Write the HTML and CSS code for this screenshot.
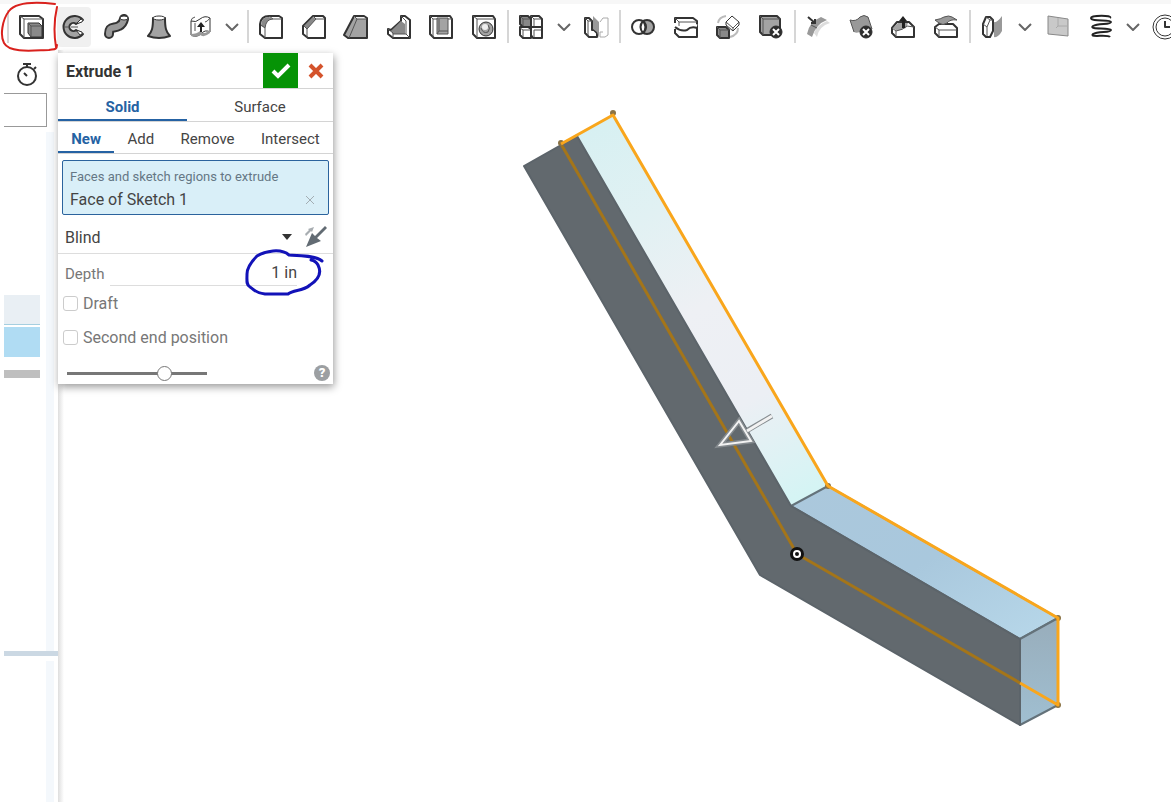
FILE: index.html
```html
<!DOCTYPE html>
<html lang="en">

<head>
	<meta charset="UTF-8">
	<title>Extrude 1</title>
	<link rel="stylesheet" href="styles.css">
</head>

<body>
	<header class="toolbar">
		<div class="group">
			<button class="tool" aria-label="Extrude"><svg viewBox="0 0 26 26"><path class="ln" d="M2 2H21L25 5V24H6L2 20Z"/><path class="lt" d="M2 2L6 5M6 24V5H25"/><path class="ln thin dark" d="M10 9H21L24 12V23H13L10 19Z"/><path class="lt" d="M10 9L13 12V23M13 12H24"/></svg></button>
			<button class="tool on" aria-label="Revolve"><svg viewBox="0 0 26 26"><path class="ln gray" d="M22 6A11 11 0 1 0 22 20L15 16A4 4 0 1 1 15 10Z"/><path class="ln thin" d="M15 10L20 5Q23 6 21 8Z"/><path class="ln thin" d="M15 16L21 18Q22 21 19 21Z"/><path class="lt" d="M3 13H8M10 13H17"/></svg></button>
			<button class="tool" aria-label="Sweep"><svg viewBox="0 0 26 26"><path class="pipe" d="M6 20C6 11 11 15 16 12Q20 10 21 5"/><path class="pipe-in" d="M6 20C6 11 11 15 16 12Q20 10 21 5"/><ellipse class="ln thin" cx="21" cy="4" rx="4" ry="2"/></svg></button>
			<button class="tool" aria-label="Loft"><svg viewBox="0 0 26 26"><path class="ln gray" d="M7 4C7 14 6 18 2 22Q13 26 24 22C20 18 19 14 19 4Z"/><ellipse class="ln thin" cx="13" cy="4" rx="6" ry="2"/></svg></button>
			<button class="tool" aria-label="Thicken"><svg viewBox="0 0 26 26"><path class="ln thin" d="M3 7Q8 9 12 5Q17 1 22 4V18Q17 15 13 20Q8 24 3 21Z"/><path class="soft" d="M3 20Q9 20 12 17Q17 22 22 15V19Q16 24 12 21Q8 24 3 22Z"/><path class="lt" d="M3 7Q3 4 7 3M7 9V17M22 4Q19 8 17 8"/><path class="solid" d="M13 8L17 13H14V18H12V13H9Z"/></svg></button>
			<button class="more" aria-label="More"><svg viewBox="0 0 14 8"><path d="M1 1L7 7L13 1"/></svg></button>
		</div>
		<div class="group">
			<button class="tool" aria-label="Fillet"><svg viewBox="0 0 26 26"><path class="ln" d="M2 10Q3 2 11 2H21L24 4V24H7L2 20Z"/><path class="dark" d="M3 12Q3 3 11 3L15 5Q8 5 7 14Z"/><path class="lt" d="M3 11L7 14V24M7 14Q8 5 15 5H24M11 2L15 5"/></svg></button>
			<button class="tool" aria-label="Chamfer"><svg viewBox="0 0 26 26"><path class="ln" d="M2 12L12 2H22L24 4V24H7L2 20Z"/><path class="dark" d="M3 12L12 3L15 5L6 15Z"/><path class="lt" d="M3 12L6 15V24M6 15L15 5H24M12 2L15 5"/></svg></button>
			<button class="tool" aria-label="Draft"><svg viewBox="0 0 26 26"><path class="ln gray" d="M11 2H21L24 4V24H5L1 21Z"/><path class="light" d="M11 3H21L23 5H14Z"/><path class="lt" d="M11 2L14 5L6 24M14 5H24"/></svg></button>
			<button class="tool" aria-label="Rib"><svg viewBox="0 0 26 26"><path class="ln" d="M2 15L5 16L15 7V2H19L24 6V24H7L2 20Z"/><path class="dark" d="M5 17L15 7L19 10V20H7Z"/><path class="lt" d="M2 15L7 19V24M15 2L20 7V20L24 24M7 20H20"/></svg></button>
			<button class="tool" aria-label="Shell"><svg viewBox="0 0 26 26"><path class="ln" d="M2 2H22L24 5V24H6L2 20Z"/><path class="lt" d="M2 2L5 5V23M5 5H24"/><path class="lt gray" d="M9 4H20V20H9Z"/><path class="lt" d="M11 5V17L9 20M11 17H20"/></svg></button>
			<button class="tool" aria-label="Hole"><svg viewBox="0 0 26 26"><path class="ln" d="M2 2H22L24 5V24H6L2 20Z"/><path class="lt" d="M2 2L6 5V24M6 5H24"/><circle class="ln thin gray" cx="15" cy="15" r="7"/><path class="lt" d="M10 14Q12 20 17 18Q20 14 17 11"/><circle class="light" cx="14" cy="13" r="3"/></svg></button>
		</div>
		<div class="group">
			<button class="tool" aria-label="Linear pattern"><svg viewBox="0 0 26 26"><path class="ln dark" d="M2 2H10L13 5V13H5L2 10Z"/><path class="ln" d="M13 2H21L24 5V13H13Z"/><path class="ln" d="M2 13H10L13 15V24H5L2 21Z"/><path class="ln" d="M13 13H24V24H15L13 21Z"/><path class="lt" d="M2 2L5 5V12M5 5H12M13 2L16 5V12M16 5H23M2 14L5 16V23M5 16H12M16 16V23M16 16H23"/></svg></button>
			<button class="more" aria-label="More"><svg viewBox="0 0 14 8"><path d="M1 1L7 7L13 1"/></svg></button>
			<button class="tool" aria-label="Mirror"><svg viewBox="0 0 26 26"><path class="pale" d="M17 8L20 4H25V21L22 23H17V18H20"/><path class="ln" d="M2 4H6L9 7V16H11L14 19V23H6L2 19Z"/><path class="soft" d="M10 2L16 8V24L14 18L10 15Z"/><path class="lt" d="M2 4L5 7V22M5 7H9"/></svg></button>
		</div>
		<div class="group">
			<button class="tool" aria-label="Boolean"><svg viewBox="0 0 26 26"><circle class="ln gray" cx="17" cy="13" r="7"/><circle class="ln" cx="9" cy="13" r="7"/><path class="ln" d="M13 7Q8 13 13 19Q18 13 13 7Z"/></svg></button>
			<button class="tool" aria-label="Split"><svg viewBox="0 0 26 26"><path class="ln" d="M2 9V4H20L24 7V22"/><path class="ln" d="M2 15V19L6 23H24V14"/><path class="lt" d="M2 4L6 8H24M6 8V12"/><path class="wave" d="M2 11Q8 17 14 14Q18 10 24 12"/><path class="lt heavy" d="M2 13Q8 18 14 16Q18 12 24 14"/></svg></button>
			<button class="tool" aria-label="Transform"><svg viewBox="0 0 26 26"><path class="arc" d="M3 9Q4 3 11 2M15 23Q23 21 23 14"/><path class="ln dark" d="M2 13H11L14 16V24H5L2 21Z"/><path class="lt" d="M2 13L5 16V24M5 16H14"/><path class="ln thin" d="M11 8L17 2L24 8V11L18 17L11 11Z"/><path class="lt" d="M11 8L18 14L24 8M18 14V17"/></svg></button>
			<button class="tool" aria-label="Delete part"><svg viewBox="0 0 26 26"><path class="ln gray" d="M2 2H19L22 5V21H5L2 18Z"/><path class="lt" d="M2 2L5 5V21M5 5H22"/><circle class="badge" cx="18" cy="18" r="6"/><path class="cross" d="M15 15L21 21M21 15L15 21"/></svg></button>
		</div>
		<div class="group">
			<button class="tool" aria-label="Modify fillet"><svg viewBox="0 0 26 26"><path class="pale-fill" d="M12 23Q14 12 25 9L22 7Q12 11 9 19Z"/><path class="soft" d="M2 20Q4 8 16 3L22 6Q11 10 7 23Z"/><path class="lt" d="M6 11L12 14"/><path class="lt heavy" d="M3 3L10 9M10 5V9H6"/></svg></button>
			<button class="tool" aria-label="Delete face"><svg viewBox="0 0 26 26"><path class="soft" d="M2 6Q8 8 12 3Q16 0 20 3L24 15Q18 13 14 17Q9 20 6 18Z"/><path class="lt" d="M2 6Q8 8 12 3Q16 0 20 3L24 15M6 18L2 6"/><circle class="badge" cx="18" cy="18" r="6"/><path class="cross" d="M15 15L21 21M21 15L15 21"/></svg></button>
			<button class="tool" aria-label="Move face"><svg viewBox="0 0 26 26"><path class="ln" d="M2 14L7 8H19L24 13V23H6L2 19Z"/><path class="gray" d="M3 14L8 9H18L16 14L7 17Z"/><path class="lt" d="M2 14L6 17Q13 16 17 12L24 13M6 17V23"/><path class="solid" d="M13 2L17 7H15V14H12V7H9Z"/></svg></button>
			<button class="tool" aria-label="Replace face"><svg viewBox="0 0 26 26"><path class="ln" d="M2 13L6 10H20L24 14V23H6L2 19Z"/><path class="lt" d="M2 13L6 16H24M6 16V23"/><path class="soft" d="M2 6Q8 5 11 3Q16 1 19 3L24 6Q17 5 14 9Q10 12 6 9Z"/><path class="lt" d="M2 6Q8 5 11 3Q16 1 19 3L24 6Q17 5 14 9Q10 12 6 9Z"/></svg></button>
		</div>
		<div class="group last">
			<button class="tool" aria-label="Plane"><svg viewBox="0 0 26 26"><path class="ln" d="M3 10L6 3H10L13 6V17L10 23H6L3 20Z"/><path class="lt" d="M3 10L7 13L10 6L13 6M7 13V22M6 3L10 6"/><path class="soft" d="M14 8Q17 9 22 2V17Q18 24 14 23Z"/></svg></button>
			<button class="more" aria-label="More"><svg viewBox="0 0 14 8"><path d="M1 1L7 7L13 1"/></svg></button>
			<button class="tool" aria-label="Frame"><svg viewBox="0 0 26 26"><path class="sheet" d="M4 2L24 5V22L4 20Z"/><path class="seam" d="M14 4V12H23M14 12L12 14"/></svg></button>
			<button class="tool" aria-label="Helix"><svg viewBox="0 0 26 26"><path class="coil" d="M22 4C25 1 3 1 3 4C3 8 23 5 23 8C23 11 10 9 5 12C0 16 22 13 23 16C23 19 10 17 5 20C1 24 20 20 22 23"/></svg></button>
			<button class="more" aria-label="More"><svg viewBox="0 0 14 8"><path d="M1 1L7 7L13 1"/></svg></button>
			<button class="tool" aria-label="History"><svg viewBox="0 0 26 26"><circle class="ln thin" cx="13" cy="13" r="12"/><circle class="ln thin" cx="13" cy="13" r="9"/><path class="ln" d="M13 7V13H18"/></svg></button>
		</div>
	</header>

	<main class="work">
		<aside class="side">
			<button class="watch" aria-label="Rebuild time"><svg viewBox="0 0 22 24"><circle cx="11" cy="14" r="9"/><path d="M11 5V2M7 2H15M18 7L20 5M11 14L8 11"/></svg></button>
			<input class="filter" type="text" aria-label="Filter">
			<div class="features">
				<div class="row"></div>
				<div class="row picked"></div>
				<div class="rollback"></div>
			</div>
			<div class="parts"></div>
		</aside>

		<section class="view">
			<svg class="model" viewBox="58 50 1113 752">
				<defs>
					<linearGradient id="side" gradientUnits="userSpaceOnUse" x1="600" y1="120" x2="800" y2="495">
						<stop offset="0" stop-color="#d7f0f2"/>
						<stop offset=".25" stop-color="#e1f1f3"/>
						<stop offset=".5" stop-color="#eef0f4"/>
						<stop offset=".75" stop-color="#eceff4"/>
						<stop offset="1" stop-color="#d5f4f4"/>
					</linearGradient>
					<linearGradient id="top" x1="0" y1="0" x2="1" y2="1">
						<stop offset="0" stop-color="#abc8dc"/>
						<stop offset=".5" stop-color="#a9c8dd"/>
						<stop offset="1" stop-color="#b8d8ea"/>
					</linearGradient>
					<linearGradient id="end" x1="0" y1="0" x2="0" y2="1">
						<stop offset="0" stop-color="#98adbb"/>
						<stop offset="1" stop-color="#a0bfd1"/>
					</linearGradient>
				</defs>
				<path fill="url(#side)" d="M577 136L613 114L828 486L791 506Z"/>
				<path fill="url(#top)" class="edge" d="M791 506L828 486L1058 618L1020 639Z"/>
				<path fill="url(#end)" class="edge" d="M1020 639L1058 618V705L1020 725Z"/>
				<path class="front" d="M524 166L577 136L791 506L1020 639V725L760 575Z"/>
				<path class="hidden" d="M561 144L797 554L1020 683"/>
				<g class="vertex"><circle cx="613" cy="113" r="3"/><circle cx="561" cy="143" r="3"/><circle cx="1058" cy="618" r="3"/><circle cx="1058" cy="705" r="3"/><circle cx="828" cy="486" r="3"/></g>
				<path class="sketch" d="M561 144L613 115L828 486L1058 618V705L1020 683"/>
				<path class="handle-back" d="M720 445L739 421L751 441ZM748 430L772 416"/>
				<path class="handle-gap" d="M747 431L772 416"/>
				<path class="handle" d="M720 445L739 421L751 441Z"/>
				<circle cx="797" cy="554" r="7" fill="#111"/>
				<circle cx="797" cy="554" r="3" fill="#111" stroke="#fff" stroke-width="2"/>
			</svg>

			<form class="dialog">
				<div class="title">
					<h1>Extrude 1</h1>
					<button class="ok" type="button" aria-label="Accept"><svg viewBox="0 0 20 16"><path d="M2 8L7 13L18 2"/></svg></button>
					<button class="cancel" type="button" aria-label="Cancel"><svg viewBox="0 0 16 16"><path d="M2 2L14 14M14 2L2 14"/></svg></button>
				</div>
				<div class="tabs kind">
					<button type="button" class="active">Solid</button>
					<button type="button">Surface</button>
				</div>
				<div class="tabs mode">
					<button type="button" class="active">New</button>
					<button type="button">Add</button>
					<button type="button">Remove</button>
					<button type="button">Intersect</button>
				</div>
				<div class="picks">
					<span class="hint">Faces and sketch regions to extrude</span>
					<div class="pick">
						<span>Face of Sketch 1</span>
						<button type="button" aria-label="Remove Face of Sketch 1"><svg viewBox="0 0 10 10"><path d="M1 1L9 9M9 1L1 9"/></svg></button>
					</div>
				</div>
				<div class="end">
					<select aria-label="End type">
						<option>Blind</option>
					</select>
					<svg class="caret" viewBox="0 0 10 6"><path d="M0 0H10L5 6Z"/></svg>
					<button type="button" aria-label="Opposite direction"><svg viewBox="0 0 24 24"><path class="far" d="M1 9L5 5L4 4L10 2L8 7L7 6L2 11Z"/><path d="M2 22L8 8L11 11L21 1L23 3L13 13L17 16Z"/></svg></button>
				</div>
				<div class="depth">
					<label for="depth">Depth</label>
					<input id="depth" type="text" value="1 in">
				</div>
				<label class="check"><input type="checkbox">Draft</label>
				<label class="check"><input type="checkbox">Second end position</label>
				<div class="foot">
					<input type="range" min="0" max="100" value="72" aria-label="Preview opacity">
					<button type="button" aria-label="Help">?</button>
				</div>
			</form>
		</section>
	</main>

	<svg class="ink red" viewBox="0 0 60 54"><path d="M55 4C38 2 17 1 9 11C2 20 0 36 4 43C10 54 37 50 49 50C54 49 57 50 57 45M57 7C54 20 54 35 56 47"/></svg>
	<svg class="ink blue" viewBox="0 0 80 50"><path d="M77 14C70 8 54 9 44 8C36 1 20 4 12 9C7 14 2 20 2 27C2 33 1 38 5 40C10 43 10 46 20 47H43C49 42 57 45 65 38C73 33 77 26 73 18Q71 14 66 13"/></svg>
</body>

</html>
```
FILE: styles.css
```css
* {
	box-sizing: border-box;
}

body {
	margin: 0;
	height: 100vh;
	display: flex;
	flex-direction: column;
	overflow: hidden;
	background: #fff;
	font-family: Roboto, "Liberation Sans", sans-serif;
	font-size: 14px;
	color: #444;
}

button,
input,
select {
	font: inherit;
	color: inherit;
	margin: 0;
	padding: 0;
	border: 0;
	background: none;
}

svg {
	display: block;
	fill: none;
}

/* toolbar */

.toolbar {
	display: grid;
	grid-template-columns: 240px 260px 112px 175px 175px minmax(0, 1fr);
	height: 50px;
	padding-left: 7px;
	border-top: 4px solid #f7f7f7;
	flex: none;
}

.group {
	display: flex;
	align-items: center;
	justify-content: space-between;
	padding: 0 6px 0 7px;
	background: linear-gradient(#d6d6d6, #d6d6d6) 0 6px / 2px 33px no-repeat;
}

.group.last {
	justify-content: flex-start;
	gap: 10px;
	overflow: hidden;
}

.tool {
	flex: none;
	width: 34px;
	height: 40px;
	border-radius: 4px;
}

.tool.on {
	background: #f0f0f0;
}

.tool svg {
	width: 26px;
	height: 26px;
	margin: auto;
}

.more {
	flex: none;
	width: 10px;
	height: 40px;
}

.more:last-child {
	margin-right: 4px;
}

.more svg {
	width: 14px;
	height: 8px;
	margin-left: -2px;
	stroke: #666;
	stroke-width: 2;
}

.ln {
	fill: #fff;
	stroke: #333;
	stroke-width: 2;
	stroke-linejoin: round;
}

.thin {
	stroke-width: 1;
}

.gray {
	fill: #a3a3a3;
}

.dark {
	fill: #898989;
}

.soft {
	fill: #999;
}

.light {
	fill: #eee;
}

.solid {
	fill: #222;
}

.lt {
	stroke: #555;
	stroke-width: 1;
}

.heavy {
	stroke: #333;
	stroke-width: 2;
}

.pale {
	stroke: #aaa;
}

.pale-fill {
	fill: #ddd;
}

.pipe {
	stroke: #333;
	stroke-width: 10;
	stroke-linecap: round;
}

.pipe-in {
	stroke: #999;
	stroke-width: 6;
	stroke-linecap: round;
}

.wave {
	stroke: #fff;
	stroke-width: 3;
}

.arc {
	stroke: #bbb;
	stroke-width: 2;
}

.badge {
	fill: #2d2d2d;
	stroke: #2d2d2d;
}

.cross {
	stroke: #fff;
	stroke-width: 2;
}

.sheet {
	fill: #c9c9c9;
	stroke: #888;
}

.seam {
	stroke: #aaa;
}

.coil {
	stroke: #222;
	stroke-width: 2;
}

/* feature list */

.work {
	flex: 1;
	display: flex;
	min-height: 0;
}

.side {
	flex: none;
	width: 58px;
	padding-left: 4px;
	display: flex;
	flex-direction: column;
}

.watch {
	width: 22px;
	height: 24px;
	margin: 12px 0 7px 12px;
}

.watch svg {
	stroke: #333;
	stroke-width: 2;
}

.filter {
	width: 43px;
	height: 34px;
	border: 1px solid #999;
	border-left: 0;
}

.features {
	flex: 1;
	margin-top: 5px;
	padding-top: 163px;
	border-right: 8px solid #f4f8fc;
	margin-right: 4px;
}

.row {
	width: 36px;
	height: 30px;
	margin-bottom: 2px;
	background: #e9eff4;
	border-bottom: 1px solid #a5cfe0;
}

.picked {
	background: #b0dcf3;
	border: 0;
}

.rollback {
	width: 36px;
	height: 8px;
	margin-top: 13px;
	background: #bfbfbf;
}

.parts {
	height: 151px;
	border-top: 5px solid #cbd8e3;
	background: linear-gradient(#f4f8fc, #f4f8fc) 42px 5px / 8px 100% no-repeat;
}

.view {
	position: relative;
	flex: 1;
	min-width: 0;
	background: linear-gradient(90deg, #dedede, #fff) 0 0 / 6px 100% no-repeat;
}

/* model */

.model {
	width: 100%;
	height: 100%;
}

.edge {
	stroke: #64727a;
	stroke-width: 2;
	stroke-linejoin: round;
}

.front {
	fill: #62696e;
	stroke: #5c646a;
	stroke-width: 2;
	stroke-linejoin: round;
}

.hidden {
	stroke: #a47519;
	stroke-width: 3;
}

.sketch {
	stroke: #f9a61c;
	stroke-width: 3;
	stroke-linejoin: round;
}

.vertex {
	fill: #8b7345;
}

.handle {
	stroke: #f2f2f2;
	stroke-width: 2;
}

.handle-back {
	stroke: #858b8f;
	stroke-width: 5;
}

.handle-gap {
	stroke: #f2f2f2;
	stroke-width: 3;
}

/* extrude dialog */

.dialog {
	position: absolute;
	top: 3px;
	left: 0;
	width: 275px;
	background: #fff;
	box-shadow: 1px 3px 8px rgba(0, 0, 0, .4);
}

.title {
	display: flex;
	height: 36px;
	border-bottom: 1px solid #d4d4d4;
}

.title h1 {
	flex: 1;
	margin: 0;
	padding-left: 8px;
	font-size: 16px;
	line-height: 38px;
	font-weight: 700;
	color: #333;
}

.title button {
	width: 35px;
	height: 35px;
}

.title svg {
	width: 20px;
	height: 16px;
	margin: auto;
	stroke: #fff;
	stroke-width: 4;
}

.ok {
	background: #069306;
}

.title .cancel svg {
	width: 16px;
	stroke: #d4532c;
}

.tabs {
	display: flex;
	border-bottom: 1px solid #d4d4d4;
}

.tabs button {
	border-bottom: 2px solid transparent;
	font-size: 15px;
}

.tabs .active {
	color: #2562a3;
	font-weight: 700;
	border-color: #2562a3;
}

.kind button {
	flex: 146;
	height: 32px;
	padding-top: 5px;
}

.kind .active {
	flex: 129;
}

.mode button {
	flex: 1 1 auto;
	height: 31px;
	padding: 5px 12px 0;
}

.picks {
	margin: 6px 4px 0;
	height: 55px;
	padding: 7px 7px 0;
	border: 1px solid #2b639d;
	border-radius: 2px;
	background: #d9eff8;
}

.hint {
	display: block;
	font-size: 13px;
	line-height: 18px;
	color: #657785;
}

.pick {
	display: flex;
	justify-content: space-between;
	align-items: center;
	padding-right: 6px;
	font-size: 16px;
	line-height: 28px;
}

.pick svg {
	width: 10px;
	height: 10px;
	stroke: #a3adb3;
}

.end {
	display: flex;
	align-items: center;
	height: 39px;
	padding: 6px 5px 0 7px;
	border-bottom: 1px solid #ddd;
	font-size: 16px;
}

.end select {
	flex: 1;
	appearance: none;
}

.caret {
	width: 10px;
	height: 6px;
	margin-right: 12px;
	fill: #333;
}

.end button svg {
	width: 24px;
	height: 24px;
	fill: #626b73;
}

.end .far {
	fill: #a8adb1;
}

.depth {
	display: flex;
	height: 32px;
	padding: 0 36px 0 7px;
	line-height: 40px;
	color: #777;
	font-size: 15px;
}

.depth input {
	flex: 1;
	min-width: 0;
	margin-left: 6px;
	text-align: right;
	border-bottom: 1px solid #ddd;
	font-size: 16px;
	color: #444;
	padding-top: 6px;
}

.check {
	display: flex;
	align-items: center;
	height: 33px;
	margin-top: 1px;
	padding-left: 5px;
	gap: 5px;
	font-size: 16px;
	color: #777;
}

.check input {
	appearance: none;
	width: 15px;
	height: 15px;
	border: 1px solid #ccc;
	border-radius: 3px;
}

.foot {
	display: flex;
	align-items: center;
	justify-content: space-between;
	height: 30px;
	padding: 8px 3px 0 9px;
}

.foot input {
	appearance: none;
	width: 140px;
	height: 3px;
	background: #777;
}

.foot input::-webkit-slider-thumb {
	appearance: none;
	width: 15px;
	height: 15px;
	border: 1px solid #777;
	border-radius: 50%;
	background: #fff;
}

.foot button {
	width: 16px;
	height: 16px;
	border-radius: 50%;
	background: #9c9fa2;
	color: #fff;
	font-size: 13px;
	line-height: 16px;
	font-weight: 900;
}

/* hand-drawn marks over the page */

.ink {
	position: absolute;
	pointer-events: none;
	stroke-width: 2;
	stroke-linecap: round;
}

.red {
	top: 0;
	left: 0;
	width: 60px;
	height: 54px;
	stroke: #d9211d;
}

.blue {
	top: 247px;
	left: 245px;
	width: 80px;
	height: 50px;
	stroke: #1212b8;
	stroke-width: 3;
}
```
